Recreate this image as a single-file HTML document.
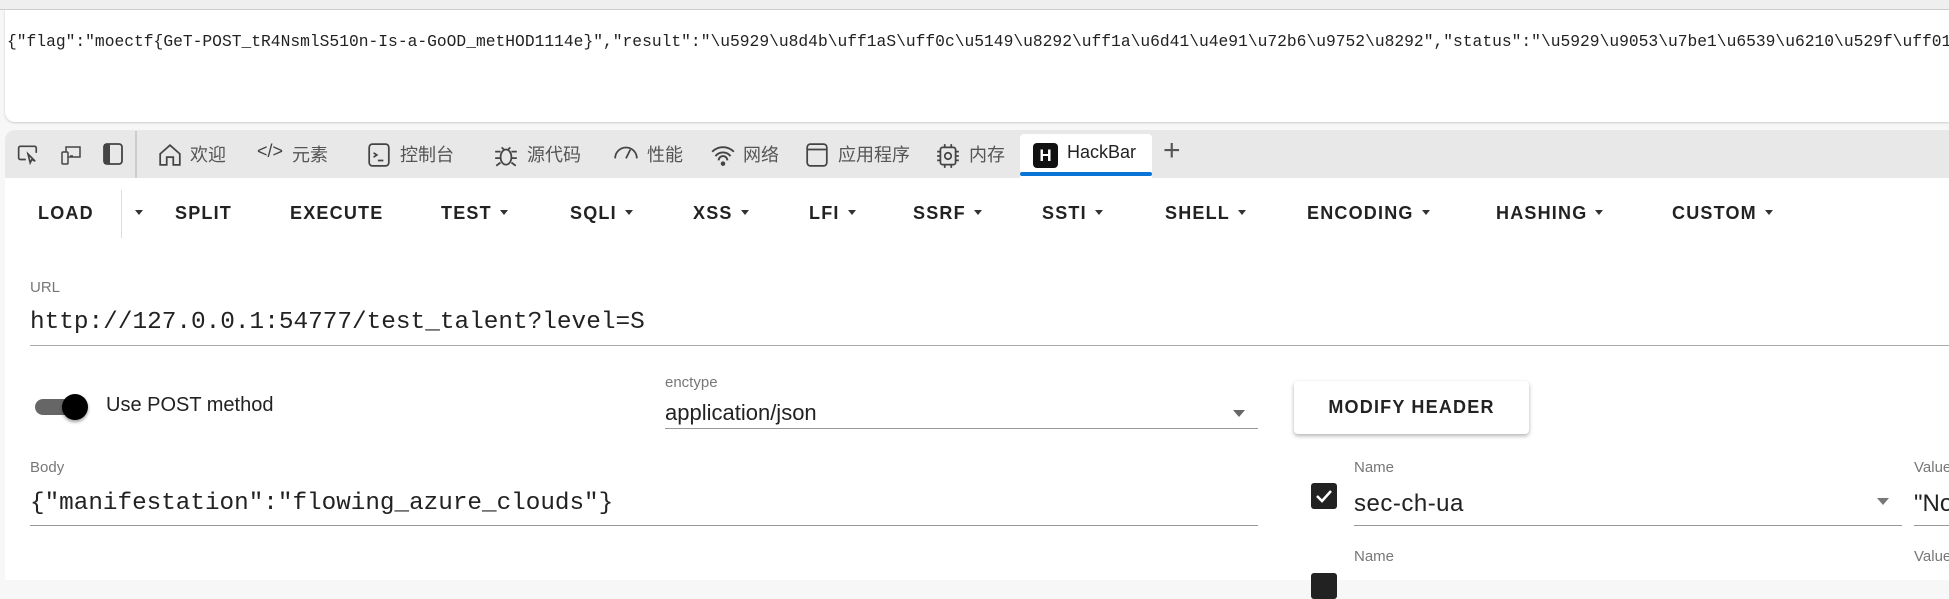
<!DOCTYPE html>
<html><head><meta charset="utf-8"><style>
*{margin:0;padding:0;box-sizing:border-box}
body{width:1949px;height:580px;overflow:hidden;background:#f7f7f7;position:relative;font-family:"Liberation Sans","Noto Sans CJK SC",sans-serif;color:#222}
.a{position:absolute;white-space:nowrap}
.mono{font-family:"Liberation Mono","Noto Sans CJK SC",monospace}
.tb{font-weight:bold;font-size:18px;letter-spacing:1.2px;color:#222;top:203px}
.tri{display:inline-block;width:0;height:0;border-left:4px solid transparent;border-right:4px solid transparent;border-top:5px solid #333;vertical-align:middle;margin-left:8px;margin-top:-3px}
.tab{font-size:18px;color:#555;top:141px}
.lbl{font-size:15px;color:#777}
.line{position:absolute;height:2px;background:#bbb}
.ico{position:absolute;top:143px}
</style></head><body>
<div class="a" style="left:0;top:0;width:1949px;height:10px;background:#efefef;border-bottom:1px solid #ccc"></div>
<div class="a" style="left:5px;top:10px;width:1944px;height:112px;background:#fff;border-radius:0 0 0 10px;box-shadow:0 1px 2px #ccc"></div>
<div class="a mono" style="left:7px;top:32px;font-size:16.3px;color:#222">{"flag":"moectf{GeT-POST_tR4NsmlS510n-Is-a-GoOD_metHOD1114e}","result":"\u5929\u8d4b\uff1aS\uff0c\u5149\u8292\uff1a\u6d41\u4e91\u72b6\u9752\u8292","status":"\u5929\u9053\u7be1\u6539\u6210\u529f\uff01"}</div>
<div class="a" style="left:5px;top:130px;width:1944px;height:48px;background:#e8e8e8;border-radius:10px 0 0 0"></div>
<div class="a" style="left:5px;top:178px;width:1944px;height:402px;background:#fff"></div>
<!-- tab icons -->
<svg class="ico" style="left:17px" width="22" height="22" viewBox="0 0 20 20" fill="none" stroke="#444" stroke-width="1.5"><path d="M8 15H3a1.5 1.5 0 0 1-1.5-1.5v-9A1.5 1.5 0 0 1 3 3h13a1.5 1.5 0 0 1 1.5 1.5V9"/><path d="M10 10l2 8 1.5-3 3 1.5z"/></svg>
<svg class="ico" style="left:60px" width="22" height="24" viewBox="0 0 22 22" fill="none" stroke="#444" stroke-width="1.5"><rect x="2" y="8" width="6" height="12" rx="1"/><path d="M6 8V3h14v10h-12"/><path d="M10 12h3"/></svg>
<svg class="ico" style="left:103px" width="20" height="22" viewBox="0 0 20 22"><rect x="1" y="1" width="18" height="20" rx="3" fill="none" stroke="#444" stroke-width="1.8"/><rect x="1" y="1" width="6" height="20" fill="#444"/></svg>
<div class="a" style="left:135px;top:131px;width:2px;height:47px;background:#ccc"></div>
<svg class="ico" style="left:158px" width="24" height="24" viewBox="0 0 22 22" fill="none" stroke="#444" stroke-width="1.6"><path d="M2 10L11 2l9 8v10h-6v-7H8v7H2z"/></svg>
<div class="a tab" style="left:190px">欢迎</div>
<div class="a tab" style="left:257px;color:#444">&lt;/&gt;</div>
<div class="a tab" style="left:292px">元素</div>
<svg class="ico" style="left:368px" width="22" height="24" viewBox="0 0 20 22" fill="none" stroke="#444" stroke-width="1.6"><rect x="1" y="1" width="18" height="20" rx="3"/><path d="M5 9l3 2-3 2M9 16h5"/></svg>
<div class="a tab" style="left:400px">控制台</div>
<svg class="ico" style="left:493px" width="26" height="26" viewBox="0 0 24 24" fill="none" stroke="#444" stroke-width="1.6"><ellipse cx="12" cy="13" rx="5" ry="7"/><path d="M2 8h5M17 8h5M2 14h5M17 14h5M3 21l4-3M21 21l-4-3M8 4l2 2M16 4l-2 2"/></svg>
<div class="a tab" style="left:527px">源代码</div>
<svg class="ico" style="left:613px" width="26" height="22" viewBox="0 0 24 20" fill="none" stroke="#444" stroke-width="1.6"><path d="M2 14a10 10 0 0 1 20 0M12 14l4-8"/></svg>
<div class="a tab" style="left:647px">性能</div>
<svg class="ico" style="left:710px" width="26" height="24" viewBox="0 0 24 22" fill="none" stroke="#444" stroke-width="1.8"><path d="M2 8a14 14 0 0 1 20 0M5 12a9 9 0 0 1 14 0M8 16a4 4 0 0 1 8 0"/><circle cx="12" cy="19" r="1.2" fill="#444"/></svg>
<div class="a tab" style="left:743px">网络</div>
<svg class="ico" style="left:806px" width="22" height="24" viewBox="0 0 20 22" fill="none" stroke="#444" stroke-width="1.6"><rect x="1" y="1" width="18" height="20" rx="3"/><path d="M1 6h18"/></svg>
<div class="a tab" style="left:838px">应用程序</div>
<svg class="ico" style="left:936px" width="24" height="26" viewBox="0 0 22 24" fill="none" stroke="#444" stroke-width="1.6"><rect x="4" y="4" width="14" height="16" rx="2"/><circle cx="11" cy="12" r="3"/><path d="M1 8h3M1 12h3M1 16h3M18 8h3M18 12h3M18 16h3M8 1v3M14 1v3M8 20v3M14 20v3"/></svg>
<div class="a tab" style="left:969px">内存</div>
<div class="a" style="left:1020px;top:134px;width:132px;height:44px;background:#fff;border-radius:4px 4px 0 0"></div>
<div class="a" style="left:1020px;top:172px;width:132px;height:4px;background:#0a74d6;border-radius:2px"></div>
<div class="a" style="left:1033px;top:143px;width:25px;height:25px;background:#111;border-radius:4px;color:#fff;font-weight:bold;font-size:17px;text-align:center;line-height:25px">H</div>
<div class="a" style="left:1067px;top:142px;font-size:18px;color:#222">HackBar</div>
<div class="a" style="left:1163px;top:134px;font-size:30px;color:#555;font-weight:300">+</div>
<!-- toolbar -->
<div class="a" style="left:121px;top:190px;width:1px;height:48px;background:#ddd"></div>
<div class="a tb" style="left:38px">LOAD</div>
<div class="a tb" style="left:127px"><span class="tri"></span></div>
<div class="a tb" style="left:175px">SPLIT</div>
<div class="a tb" style="left:290px">EXECUTE</div>
<div class="a tb" style="left:441px">TEST<span class="tri"></span></div>
<div class="a tb" style="left:570px">SQLI<span class="tri"></span></div>
<div class="a tb" style="left:693px">XSS<span class="tri"></span></div>
<div class="a tb" style="left:809px">LFI<span class="tri"></span></div>
<div class="a tb" style="left:913px">SSRF<span class="tri"></span></div>
<div class="a tb" style="left:1042px">SSTI<span class="tri"></span></div>
<div class="a tb" style="left:1165px">SHELL<span class="tri"></span></div>
<div class="a tb" style="left:1307px">ENCODING<span class="tri"></span></div>
<div class="a tb" style="left:1496px">HASHING<span class="tri"></span></div>
<div class="a tb" style="left:1672px">CUSTOM<span class="tri"></span></div>
<!-- URL -->
<div class="a lbl" style="left:30px;top:279px">URL</div>
<div class="a mono" style="left:30px;top:309px;font-size:24.4px;color:#222">http://127.0.0.1:54777/test_talent?level=S</div>
<div class="line" style="left:30px;top:345px;width:1919px;height:1px;background:#aaa"></div>
<!-- toggle -->
<div class="a" style="left:35px;top:399px;width:50px;height:16px;border-radius:8px;background:#666"></div>
<div class="a" style="left:62px;top:394px;width:26px;height:26px;border-radius:13px;background:#000;box-shadow:0 2px 3px rgba(0,0,0,.4)"></div>
<div class="a" style="left:106px;top:394px;font-size:20px;color:#222">Use POST method</div>
<div class="a lbl" style="left:665px;top:374px">enctype</div>
<div class="a" style="left:665px;top:400px;font-size:22px;color:#222">application/json</div>
<div class="a" style="left:1233px;top:410px;border-left:6px solid transparent;border-right:6px solid transparent;border-top:7px solid #666"></div>
<div class="line" style="left:665px;top:428px;width:593px;height:1px;background:#999"></div>
<div class="a" style="left:1294px;top:381px;width:235px;height:53px;background:#fff;border-radius:4px;box-shadow:0 2px 4px rgba(0,0,0,.3);font-weight:bold;font-size:18px;letter-spacing:1.2px;text-align:center;line-height:53px;color:#222">MODIFY HEADER</div>
<!-- body -->
<div class="a lbl" style="left:30px;top:459px">Body</div>
<div class="a mono" style="left:30px;top:490px;font-size:24.3px;color:#222">{"manifestation":"flowing_azure_clouds"}</div>
<div class="line" style="left:30px;top:525px;width:1228px;height:1px;background:#999"></div>
<!-- headers -->
<div class="a" style="left:1311px;top:483px;width:26px;height:26px;background:#222;border-radius:3px"></div>
<svg class="a" style="left:1311px;top:483px" width="26" height="26" viewBox="0 0 26 26"><path d="M6 13l5 5 9-10" fill="none" stroke="#fff" stroke-width="2.5"/></svg>
<div class="a lbl" style="left:1354px;top:459px">Name</div>
<div class="a" style="left:1354px;top:490px;font-size:24px;color:#222;letter-spacing:0.5px">sec-ch-ua</div>
<div class="a" style="left:1877px;top:498px;border-left:6px solid transparent;border-right:6px solid transparent;border-top:7px solid #777"></div>
<div class="line" style="left:1354px;top:525px;width:548px;height:1px;background:#999"></div>
<div class="a lbl" style="left:1914px;top:459px">Value</div>
<div class="a" style="left:1914px;top:490px;font-size:24px;color:#222">"Not</div>
<div class="line" style="left:1914px;top:525px;width:35px;height:1px;background:#999"></div>
<div class="a lbl" style="left:1354px;top:548px">Name</div>
<div class="a lbl" style="left:1914px;top:548px">Value</div>
<div class="a" style="left:1311px;top:573px;width:26px;height:26px;background:#222;border-radius:3px"></div>
</body></html>
